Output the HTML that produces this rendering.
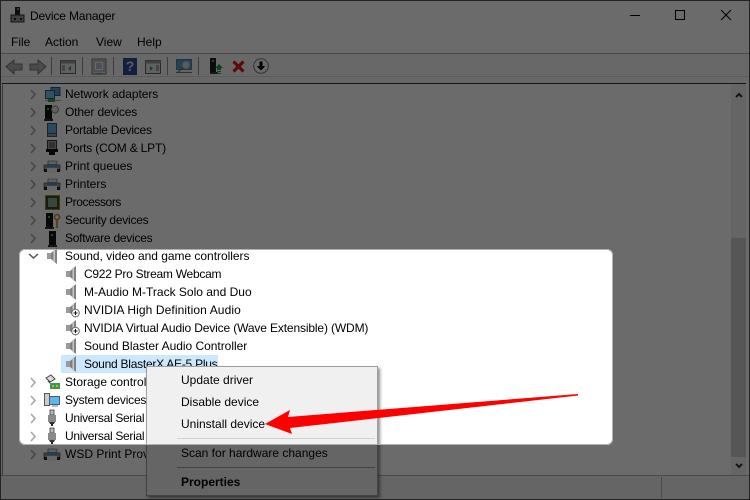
<!DOCTYPE html>
<html><head><meta charset="utf-8"><style>
html,body{margin:0;padding:0}
body{width:750px;height:500px;overflow:hidden;position:relative;background:#fff;font-family:"Liberation Sans",sans-serif;font-size:12px;color:#000}
.a{position:absolute}
.t{position:absolute;white-space:nowrap;line-height:18px;height:18px}
svg{position:absolute;overflow:visible}
.sep{position:absolute;width:1px;height:18px;top:57px;background:#909090}
</style></head><body>
<svg width="0" height="0" style="position:absolute">
<defs>
<g id="chev"><path d="M1 1l4 4.500-4 4.500" fill="none" stroke="#a6a6a6" stroke-width="1.600"/></g>
<g id="spk"><path d="M0 5h4v6H0z" fill="#9a9a9a"/><path d="M4 5l6-5v16l-6-5z" fill="#808080"/><path d="M6.500 2l1.500-1v14l-1.500-1z" fill="#c8c8c8"/></g>
<g id="tower"><path d="M0 0h7v14H0z" fill="#141414"/><path d="M2 3h2v2H2z" fill="#2fc04a"/><path d="M-1 14h9v2h-9z" fill="#333"/></g>
<g id="printer"><path d="M4 0h9v4H4z" fill="#e4e4e4" stroke="#555" stroke-width=".6"/><path d="M0 4h16v6H0z" fill="#9c9c9c" stroke="#333" stroke-width=".6"/><path d="M3 3h10v3H3z" fill="#4a90c0"/><path d="M3 7h10v5H3z" fill="#f4f4f4"/><path d="M0 8h3v3H0zM13 8h3v3h-3z" fill="#222"/></g>
<g id="usb"><path d="M2 0h4v5H2z" fill="#bbb" stroke="#333" stroke-width=".8"/><path d="M0 5h8v7H0z" fill="#8a8a8a"/><path d="M1 12h6l-1 2H2z" fill="#333"/><path d="M3 14h2v2H3z" fill="#222"/></g>
</defs></svg>

<!-- title bar -->
<svg style="left:10px;top:6px" width="15" height="18"><path d="M5 1h5v8H5z" fill="#222"/><path d="M7 2h2v2H7z" fill="#2fc04a"/><path d="M1 9h13v7H1z" fill="#9a9a9a" stroke="#333"/><path d="M4 12h2v2H4zM10 12h2v2h-2z" fill="#222"/></svg>
<div class="t" style="left:30px;top:7px;letter-spacing:-.15px">Device Manager</div>
<div class="a" style="left:630px;top:15px;width:10px;height:1px;background:#000"></div>
<div class="a" style="left:675px;top:10px;width:8px;height:8px;border:1px solid #000"></div>
<svg style="left:721px;top:10px" width="10" height="10"><path d="M0 0l10 10M10 0L0 10" stroke="#000" stroke-width="1"/></svg>

<!-- menu bar -->
<div class="t" style="left:11px;top:33px">File</div>
<div class="t" style="left:45px;top:33px">Action</div>
<div class="t" style="left:96px;top:33px">View</div>
<div class="t" style="left:137px;top:33px">Help</div>
<div class="a" style="left:0;top:53px;width:750px;height:1px;background:#b0b0b0"></div>

<!-- toolbar -->
<div class="a" style="left:0;top:54px;width:750px;height:30px;background:#f8f8f8"></div>
<div class="a" style="left:0;top:76px;width:750px;height:1px;background:#d8d8d8"></div>
<svg style="left:6px;top:59px" width="40" height="16"><path d="M0 7.500L8 1v4h8v6H8v4z" fill="#b0b0b0" stroke="#777"/><path d="M40 7.500L32 1v4h-8v6h8v4z" fill="#b0b0b0" stroke="#777"/></svg>
<div class="sep" style="left:51px"></div>
<svg style="left:60px;top:60px" width="17" height="15"><path d="M.5.500h15v13H.5z" fill="#e8e8e8" stroke="#666"/><path d="M.5.500h15v3H.5z" fill="#999"/><path d="M11 6v5l-3-2.500z" fill="#2aa84a"/><path d="M2 6h3M2 8h3M2 10h3" stroke="#666"/></svg>
<div class="sep" style="left:82px"></div>
<svg style="left:91px;top:58px" width="16" height="17"><path d="M1 1h14v15H1z" fill="#ddd" stroke="#777"/><path d="M3 3h10v10H3z" fill="#f4f4f4" stroke="#999"/><path d="M5 6h6M5 8h6M5 10h6" stroke="#6a8ab0"/><path d="M5 15h6v1H5z" fill="#3aa0d8"/></svg>
<div class="sep" style="left:113px"></div>
<svg style="left:123px;top:58px" width="14" height="17"><path d="M0 0h14v17H0z" fill="#2a4a9c"/></svg>
<div class="a" style="left:123px;top:58px;width:14px;height:17px;line-height:17px;text-align:center;color:#ddd;font-weight:bold;font-size:14px">?</div>
<svg style="left:145px;top:60px" width="17" height="15"><path d="M.5.500h15v13H.5z" fill="#e8e8e8" stroke="#666"/><path d="M.5.500h15v3H.5z" fill="#999"/><path d="M5 6v5l3-2.500z" fill="#2aa84a"/><path d="M11 6h3M11 8h3M11 10h3" stroke="#666"/></svg>
<div class="sep" style="left:167px"></div>
<svg style="left:176px;top:59px" width="17" height="15"><path d="M.5.500h15v10H.5z" fill="#5aa0d0" stroke="#4a7fa8"/><circle cx="10" cy="6" r="4" fill="#bfe0f2" stroke="#999"/><path d="M7 9l-5 4M0 13.500h16" stroke="#777" stroke-width="1.300"/></svg>
<div class="sep" style="left:198px"></div>
<svg style="left:210px;top:58px" width="14" height="17"><path d="M0 0h6v14H0z" fill="#1c1c1c"/><path d="M2 2h2v2H2z" fill="#2fc04a"/><path d="M0 14h8v2H0z" fill="#333"/><path d="M9 6l4 4h-2v2H7v-2H5z" fill="#1e9c3c"/><path d="M7 13h4v1H7zM7 15h4v1H7z" fill="#1e9c3c"/></svg>
<svg style="left:232px;top:60px" width="13" height="13"><path d="M1.500 1.500l10 10M11.500 1.500l-10 10" stroke="#e01818" stroke-width="3.200"/></svg>
<svg style="left:253px;top:58px" width="16" height="16"><circle cx="8" cy="8" r="7.300" fill="#fafafa" stroke="#777"/><path d="M8 3.500v5" stroke="#000" stroke-width="3"/><path d="M3.800 8h8.400L8 12.500z" fill="#000"/></svg>

<!-- tree border -->
<div class="a" style="left:2px;top:83px;width:744px;height:1px;background:#3a3a3a"></div>
<div class="a" style="left:2px;top:84px;width:1px;height:391px;background:#888"></div>

<!-- tree -->
<svg style="left:30px;top:89px" width="8" height="350">
<use href="#chev" y="0"/><use href="#chev" y="18"/><use href="#chev" y="36"/><use href="#chev" y="54"/><use href="#chev" y="72"/><use href="#chev" y="90"/><use href="#chev" y="108"/><use href="#chev" y="126"/><use href="#chev" y="144"/>
<use href="#chev" y="288"/><use href="#chev" y="306"/><use href="#chev" y="324"/><use href="#chev" y="342"/><use href="#chev" y="360"/>
</svg>
<svg style="left:28px;top:253px" width="11" height="7"><path d="M1 1l4.500 4 4.500-4" fill="none" stroke="#555" stroke-width="1.500"/></svg>

<svg style="left:45px;top:87px" width="16" height="16"><path d="M6 .5h9v8H6z" fill="#5a9cc8" stroke="#2a5a80"/><path d="M.5 3.500h9v8h-9z" fill="#7ac0ec" stroke="#2a5a80"/><path d="M0 13h16v1H0z" fill="#aaa"/><path d="M3 12h7v3H3z" fill="#2aa84a"/></svg>
<svg style="left:45px;top:105px" width="15" height="16"><use href="#tower"/><circle cx="10" cy="4.500" r="3.500" fill="#e8e8e8" stroke="#888"/></svg>
<svg style="left:47px;top:123px" width="11" height="14"><path d="M0 0h10v14H0z" fill="#555"/><path d="M1 1h8v9H1z" fill="#5ab0e8"/><path d="M1 11h8v2H1z" fill="#999"/></svg>
<svg style="left:46px;top:140px" width="13" height="16"><path d="M1.500.500h9v10h-9z" fill="#aaa" stroke="#333"/><path d="M3 3h6M3 5h6M3 7h6" stroke="#444"/><path d="M0 9h12v3H0z" fill="#111"/><path d="M3 12h6v3H3z" fill="#111"/></svg>
<svg style="left:44px;top:161px" width="16" height="12"><use href="#printer"/></svg>
<svg style="left:44px;top:179px" width="16" height="12"><use href="#printer"/></svg>
<svg style="left:45px;top:195px" width="15" height="15"><path d="M.5.500h14v14H.5z" fill="#2c4a2c" stroke="#9a8a2a"/><path d="M3 3h9v9H3z" fill="#8aaa94"/></svg>
<svg style="left:46px;top:213px" width="15" height="17"><use href="#tower"/><circle cx="11" cy="4" r="2.500" fill="none" stroke="#c89a30" stroke-width="1.800"/><path d="M11 6v9" stroke="#c89a30" stroke-width="1.800"/></svg>
<svg style="left:49px;top:231px" width="9" height="16"><use href="#tower"/></svg>
<svg style="left:47px;top:248px" width="10" height="16"><use href="#spk"/></svg>

<div class="t" style="left:65px;top:85px;letter-spacing:-.05px">Network adapters</div>
<div class="t" style="left:65px;top:103px;letter-spacing:-.15px">Other devices</div>
<div class="t" style="left:65px;top:121px;letter-spacing:-.25px">Portable Devices</div>
<div class="t" style="left:65px;top:139px;letter-spacing:-.18px">Ports (COM &amp; LPT)</div>
<div class="t" style="left:65px;top:157px">Print queues</div>
<div class="t" style="left:65px;top:175px">Printers</div>
<div class="t" style="left:65px;top:193px;letter-spacing:-.4px">Processors</div>
<div class="t" style="left:65px;top:211px;letter-spacing:-.25px">Security devices</div>
<div class="t" style="left:65px;top:229px;letter-spacing:-.25px">Software devices</div>
<div class="t" style="left:65px;top:247px;letter-spacing:-.03px">Sound, video and game controllers</div>

<div class="a" style="left:61px;top:355px;width:157px;height:18px;background:#cce8ff"></div>
<svg style="left:66px;top:266px" width="10" height="16"><use href="#spk"/></svg>
<svg style="left:66px;top:284px" width="10" height="16"><use href="#spk"/></svg>
<svg style="left:66px;top:302px" width="14" height="16"><use href="#spk"/><circle cx="9.500" cy="11" r="3.800" fill="#fff" stroke="#666"/><path d="M9.500 9v4M7.500 11h4" stroke="#111"/></svg>
<svg style="left:66px;top:320px" width="14" height="16"><use href="#spk"/><circle cx="9.500" cy="11" r="3.800" fill="#fff" stroke="#666"/><path d="M9.500 9v4M7.500 11h4" stroke="#111"/></svg>
<svg style="left:66px;top:338px" width="10" height="16"><use href="#spk"/></svg>
<svg style="left:66px;top:356px" width="10" height="16"><use href="#spk"/></svg>
<div class="t" style="left:84px;top:265px;letter-spacing:-.27px">C922 Pro Stream Webcam</div>
<div class="t" style="left:84px;top:283px">M-Audio M-Track Solo and Duo</div>
<div class="t" style="left:84px;top:301px;letter-spacing:.1px">NVIDIA High Definition Audio</div>
<div class="t" style="left:84px;top:319px;letter-spacing:-.14px">NVIDIA Virtual Audio Device (Wave Extensible) (WDM)</div>
<div class="t" style="left:84px;top:337px;letter-spacing:-.03px">Sound Blaster Audio Controller</div>
<div class="t" style="left:84px;top:355px;letter-spacing:-.25px">Sound BlasterX AE-5 Plus</div>

<svg style="left:45px;top:375px" width="16" height="15"><path d="M1 3l5-3 4 4-5 3z" fill="#ddd" stroke="#444"/><path d="M3 6l3 3" stroke="#444"/><path d="M5 8h10v6H5z" fill="#3a9a4a"/><path d="M7 10h2v2H7zM11 10h2v2h-2z" fill="#c8b040"/></svg>
<svg style="left:44px;top:393px" width="17" height="15"><path d="M.5.500h5v12h-5z" fill="#ccc" stroke="#555"/><path d="M5.500 3.500h10v8h-10z" fill="#5ab8f0" stroke="#557"/><path d="M8 13h6" stroke="#777"/></svg>
<svg style="left:48px;top:410px" width="9" height="17"><use href="#usb"/></svg>
<svg style="left:48px;top:428px" width="9" height="17"><use href="#usb"/></svg>
<svg style="left:44px;top:449px" width="16" height="12"><use href="#printer"/></svg>
<div class="t" style="left:65px;top:373px">Storage controllers</div>
<div class="t" style="left:65px;top:391px;letter-spacing:-.2px">System devices</div>
<div class="t" style="left:65px;top:409px;letter-spacing:-.3px">Universal Serial Bus controllers</div>
<div class="t" style="left:65px;top:427px;letter-spacing:-.3px">Universal Serial Bus devices</div>
<div class="t" style="left:65px;top:445px">WSD Print Provider</div>

<!-- scrollbar -->
<div class="a" style="left:731px;top:84px;width:15px;height:391px;background:#f0f0f0"></div>
<div class="a" style="left:731px;top:238px;width:15px;height:219px;background:#cdcdcd"></div>
<svg style="left:735px;top:92px" width="8" height="6"><path d="M1 5l3-3 3 3" fill="none" stroke="#333" stroke-width="2"/></svg>
<svg style="left:735px;top:463px" width="8" height="6"><path d="M1 1l3 3 3-3" fill="none" stroke="#333" stroke-width="2"/></svg>

<!-- status bar -->
<div class="a" style="left:0;top:475px;width:750px;height:25px;background:#f0f0f0;border-top:1px solid #b0b0b0;box-sizing:border-box"></div>
<div class="a" style="left:661px;top:477px;width:1px;height:21px;background:#b0b0b0"></div>

<!-- context menu -->
<div class="a" style="left:146px;top:366px;width:232px;height:130px;background:#f0f0f0;border:1px solid #a0a0a0;box-sizing:border-box;box-shadow:2px 2px 3px rgba(0,0,0,.45)"></div>
<div class="t" style="left:181px;top:371px">Update driver</div>
<div class="t" style="left:181px;top:393px">Disable device</div>
<div class="t" style="left:181px;top:415px">Uninstall device</div>
<div class="a" style="left:177px;top:438px;width:198px;height:1px;background:#d0d0d0"></div>
<div class="t" style="left:181px;top:444px">Scan for hardware changes</div>
<div class="a" style="left:177px;top:467px;width:198px;height:1px;background:#a0a0a0"></div>
<div class="t" style="left:181px;top:473px;font-weight:bold">Properties</div>

<!-- window edges -->
<div class="a" style="left:0;top:0;width:750px;height:500px;box-sizing:border-box;border:1px solid #555"></div>

<!-- dim overlay with cutout -->
<div class="a" style="left:0;top:0;width:750px;height:500px;overflow:hidden">
<div class="a" style="left:19px;top:249px;width:594px;height:196px;box-sizing:border-box;border-radius:6px;border:1px solid #b0b0b0;box-shadow:0 0 0 900px rgba(0,0,0,.58)"></div>
</div>

<!-- arrow -->
<svg style="left:0;top:0" width="750" height="500"><path d="M265 424L290 410L288 417L578 394L578 395.500L290 428L292 434Z" fill="#fe0000"/></svg>
</body></html>
